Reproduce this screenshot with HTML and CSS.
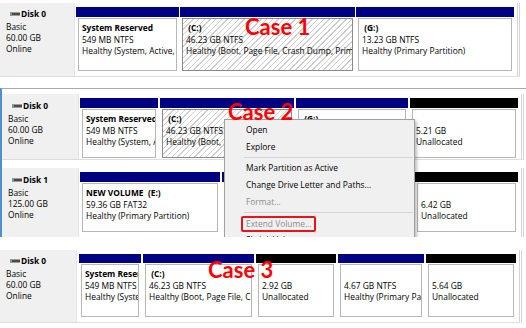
FILE: index.html
```html
<!DOCTYPE html>
<html>
<head>
    <title>Disk Management - Extend Volume cases</title>
    <link rel="stylesheet" href="styles.css">
</head>
<body>
    <!-- Case 1 -->
    <div class="panel p1">
        <div class="row">
            <div class="label">
                <div class="name"><svg class="ico" width="10" height="4" viewBox="0 0 10 4"><rect width="10" height="3" y="0.5" fill="#4a4a4a"/><rect width="2" height="3" y="0.5" fill="#6fa86f"/></svg>Disk 0</div>
                <div>Basic</div>
                <div>60.00 GB</div>
                <div>Online</div>
            </div>
            <div class="parts">
                <div class="part" style="width:103px">
                    <div class="bar"></div>
                    <div class="box"><b>System Reserved</b><span>549 MB NTFS</span><span>Healthy (System, Active, Primary Partition)</span></div>
                </div>
                <div class="part" style="width:175px">
                    <div class="bar"></div>
                    <div class="box sel"><b>&nbsp;(C:)</b><span>46.23 GB NTFS</span><span>Healthy (Boot, Page File, Crash Dump, Primary Partition)</span></div>
                </div>
                <div class="part" style="width:158px">
                    <div class="bar"></div>
                    <div class="box"><b>&nbsp;(G:)</b><span>13.23 GB NTFS</span><span>Healthy (Primary Partition)</span></div>
                </div>
            </div>
        </div>
        <div class="case c1">Case 1</div>
    </div>

    <!-- Case 2 -->
    <div class="panel p2">
        <div class="row r1">
            <div class="label">
                <div class="name"><svg class="ico" width="10" height="4" viewBox="0 0 10 4"><rect width="10" height="3" y="0.5" fill="#4a4a4a"/><rect width="2" height="3" y="0.5" fill="#6fa86f"/></svg>Disk 0</div>
                <div>Basic</div>
                <div>60.00 GB</div>
                <div>Online</div>
            </div>
            <div class="parts">
                <div class="part" style="width:78px">
                    <div class="bar"></div>
                    <div class="box"><b>System Reserved</b><span>549 MB NTFS</span><span>Healthy (System, Active, Primary Partition)</span></div>
                </div>
                <div class="part" style="width:134px">
                    <div class="bar"></div>
                    <div class="box sel"><b>&nbsp;(C:)</b><span>46.23 GB NTFS</span><span>Healthy (Boot, Page File, Crash Dump, Primary Partition)</span></div>
                </div>
                <div class="part" style="width:112px">
                    <div class="bar"></div>
                    <div class="box"><b>&nbsp;(G:)</b><span>13.23 GB NTFS</span><span>Healthy (Primary Partition)</span></div>
                </div>
                <div class="part" style="width:108px">
                    <div class="bar free"></div>
                    <div class="box"><b>&nbsp;</b><span>5.21 GB</span><span>Unallocated</span></div>
                </div>
            </div>
        </div>
        <div class="row r2">
            <div class="label">
                <div class="name"><svg class="ico" width="10" height="4" viewBox="0 0 10 4"><rect width="10" height="3" y="0.5" fill="#4a4a4a"/><rect width="2" height="3" y="0.5" fill="#6fa86f"/></svg>Disk 1</div>
                <div>Basic</div>
                <div>125.00 GB</div>
                <div>Online</div>
            </div>
            <div class="parts">
                <div class="part" style="width:140px">
                    <div class="bar"></div>
                    <div class="box"><b>NEW VOLUME&nbsp; (E:)</b><span>59.36 GB FAT32</span><span>Healthy (Primary Partition)</span></div>
                </div>
                <div class="part" style="width:191px">
                    <div class="bar"></div>
                    <div class="box"><b>&nbsp;</b><span>&nbsp;</span><span>&nbsp;</span></div>
                </div>
                <div class="part" style="width:103px">
                    <div class="bar free"></div>
                    <div class="box"><b>&nbsp;</b><span>6.42 GB</span><span>Unallocated</span></div>
                </div>
            </div>
        </div>

        <div class="menu">
            <div class="item">Open</div>
            <div class="item">Explore</div>
            <div class="sep"></div>
            <div class="item">Mark Partition as Active</div>
            <div class="item">Change Drive Letter and Paths...</div>
            <div class="item off">Format...</div>
            <div class="sep"></div>
            <div class="item off"><span class="mark">Extend Volume...</span></div>
            <div class="item">Shrink Volume...</div>
            <div class="item">Delete Volume...</div>
        </div>
        <div class="case c2">Case 2</div>
    </div>

    <!-- Case 3 -->
    <div class="panel p3">
        <div class="row">
            <div class="label">
                <div class="name"><svg class="ico" width="10" height="4" viewBox="0 0 10 4"><rect width="10" height="3" y="0.5" fill="#4a4a4a"/><rect width="2" height="3" y="0.5" fill="#6fa86f"/></svg>Disk 0</div>
                <div>Basic</div>
                <div>60.00 GB</div>
                <div>Online</div>
            </div>
            <div class="parts">
                <div class="part" style="width:62px">
                    <div class="bar"></div>
                    <div class="box"><b>System Reserved</b><span>549 MB NTFS</span><span>Healthy (System, Active, Primary Partition)</span></div>
                </div>
                <div class="part" style="width:111px">
                    <div class="bar"></div>
                    <div class="box"><b>&nbsp;(C:)</b><span>46.23 GB NTFS</span><span>Healthy (Boot, Page File, Crash Dump, Primary Partition)</span></div>
                </div>
                <div class="part" style="width:80px">
                    <div class="bar free"></div>
                    <div class="box"><b>&nbsp;</b><span>2.92 GB</span><span>Unallocated</span></div>
                </div>
                <div class="part" style="width:86px">
                    <div class="bar"></div>
                    <div class="box"><b>&nbsp;</b><span>4.67 GB NTFS</span><span>Healthy (Primary Partition)</span></div>
                </div>
                <div class="part" style="width:90px">
                    <div class="bar free"></div>
                    <div class="box"><b>&nbsp;</b><span>5.64 GB</span><span>Unallocated</span></div>
                </div>
            </div>
        </div>
        <div class="case c3">Case 3</div>
    </div>
</body>
</html>
```

FILE: styles.css
```css
body { margin: 0; width: 526px; height: 328px; overflow: hidden; background: #fff; font-family: "Open Sans", "Liberation Sans", sans-serif; font-size: 8.4px; color: #000; }

.panel { position: relative; box-sizing: border-box; }
.p1 { height: 78px; padding-top: 3px; }
.p2 { height: 149px; margin-top: 10px; padding-top: 5px; border-top: 1px solid #a9a9a9; border-left: 2px solid #4f8fd0; overflow: hidden; }
.p3 { height: 78px; margin-top: 13px; }

.row { display: flex; height: 74px; }
.p2 .r1 { height: 66px; }
.p2 .r2 { height: 70px; margin-top: 8px; }
.p3 .row { height: 73px; }

.label { width: 75px; flex: none; box-sizing: border-box; padding: 5px 0 0 6px; background: #f0f0f0; border-right: 1px solid #e3e3e3; border-bottom: 1px solid #dcdcdc; line-height: 11px; }
.p2 .label { width: 77px; padding-top: 6px; }
.p3 .label { width: 77px; }
.name { display: flex; align-items: center; font-weight: bold; margin: 0 0 1px 4px; line-height: 12px; }
.ico { margin-right: 1px; }

.parts { display: flex; gap: 1px; padding: 4px 3px 0 1px; border-right: 3px double #d4d4d4; border-bottom: 1px solid #dedede; }
.p1 .parts { padding-left: 1px; }
.p2 .parts, .p3 .parts { gap: 2px; }
.p3 .parts { padding-left: 2px; }

.part { display: flex; flex-direction: column; flex: none; }
.bar { height: 10px; background: #000082; }
.p3 .bar { height: 9px; }
.bar.free { background: #000; }

.box { flex: 1; margin: 1px 2px 5px; padding: 3px 3px 0; border: 1px solid #b7b7b7; background: #fff; line-height: 11.5px; white-space: nowrap; overflow: hidden; }
.p2 .r1 .box { margin-bottom: 1px; }
.box b, .box span { display: block; }
.box.sel { border-color: #8a8a8a; background: repeating-linear-gradient(135deg, #fff 0 3px, #cfcfcf 3px 4px); }

.case { position: absolute; font-family: Lato, "Open Sans", sans-serif; font-weight: bold; font-size: 22px; line-height: 22px; color: #f00; }
.c1 { left: 245px; top: 16px; }
.c2 { left: 226px; top: 12px; }
.c3 { left: 208px; top: 9px; }

.menu { position: absolute; left: 222px; top: 30px; width: 189px; padding-top: 1px; background: #f0f0f0; border: 1px solid #a0a0a0; box-shadow: 2px 2px 3px rgba(0, 0, 0, 0.25); }
.item { height: 17px; line-height: 17px; padding-left: 21px; white-space: nowrap; }
.item.off { color: #8d8d8d; }
.sep { height: 1px; margin: 2px 1px 1px 19px; background: #d5d5d5; }
.mark { display: inline-block; vertical-align: middle; margin-left: -5px; padding: 0 2px 0 3px; line-height: 12px; border: 2px solid #e8141c; border-radius: 2px; }
```
